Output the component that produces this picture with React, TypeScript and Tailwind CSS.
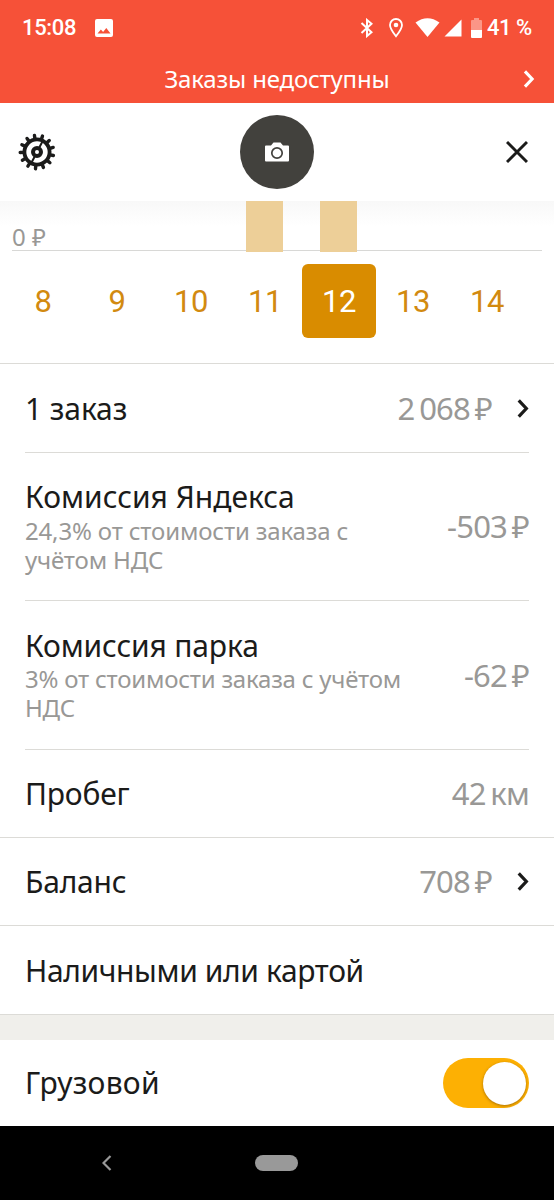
import type { ReactNode } from "react";

const body = "font-['Noto_Sans',sans-serif]";

function Chevron({ className }: { className: string }) {
  return (
    <svg className={className} viewBox="0 0 12 20" fill="none" stroke="currentColor" strokeWidth="3.4">
      <path d="M1.5 1.5 9.5 10 1.5 18.5" />
    </svg>
  );
}

function StatusBar() {
  return (
    <div className="flex h-[55px] items-center pl-[22px] font-['Roboto',sans-serif] text-[22px] font-medium leading-none text-white">
      <span className="w-[73px] tracking-[-0.35px]">15:08</span>
      <svg className="h-[18px] w-[18px]" viewBox="0 0 18 18">
        <path fillRule="evenodd" fill="currentColor" d="M2 0H16Q18 0 18 2V16Q18 18 16 18H2Q0 18 0 16V2Q0 0 2 0ZM2.5 14.5H15.5L11.3 8.9 8.1 13 5.9 10.4Z" />
      </svg>
      <svg className="ml-[247px] h-[20px] w-[13px]" viewBox="0 0 13 20" fill="none" stroke="currentColor" strokeWidth="2">
        <path d="M1.5 5 11.5 14.2 7 18V2L11.5 5.8 1.5 15" />
      </svg>
      <svg className="ml-[16px] h-[20px] w-[14px]" viewBox="0 0 14 20" fill="none" stroke="currentColor" strokeWidth="1.8">
        <path d="M7 18.3C4 14.5 1 10.5 1 7A6 6 0 0 1 13 7C13 10.5 10 14.5 7 18.3Z" />
        <circle cx="7" cy="7" r="2.3" fill="currentColor" stroke="none" />
      </svg>
      <svg className="ml-[12px] h-[20px] w-[25px]" viewBox="0 0 25 20">
        <path fill="currentColor" d="M.5 4.5Q12.5-4 24.5 4.5L12.5 19Z" />
      </svg>
      <svg className="ml-[4px] h-[18px] w-[18px]" viewBox="0 0 18 18">
        <path fill="currentColor" d="M17.5.5V17.5H.5Z" />
      </svg>
      <svg className="ml-[9px] h-[20px] w-[11px]" viewBox="0 0 11 20">
        <path fill="#fb9687" d="M3 0H8V2H10Q11 2 11 3V12H0V3Q0 2 1 2H3Z" />
        <path fill="currentColor" d="M0 12H11V19Q11 20 10 20H1Q0 20 0 19Z" />
      </svg>
      <span className="ml-[5px] whitespace-nowrap tracking-[-0.5px]">41 %</span>
    </div>
  );
}

function Gear() {
  const teeth = Array.from({ length: 13 }, (_, i) => 19 + (i * 360) / 13);
  return (
    <svg className="h-[38px] w-[38px] text-[#1b1b1a]" viewBox="-19 -19 38 38" fill="none" stroke="currentColor">
      <circle r="12.6" strokeWidth="3.8" />
      {teeth.map((a) => (
        <path key={a} d="M0-13.5V-16.8" strokeWidth="3.4" strokeLinecap="round" transform={`rotate(${a})`} />
      ))}
      <circle r="4" strokeWidth="4" />
      <path d="M2.3-4.5 6.5-12.5M-2.3 4.5-6.5 12.5" strokeWidth="2" />
    </svg>
  );
}

function Header() {
  return (
    <header className="grid h-[98px] grid-cols-[1fr_74px_1fr] items-center bg-white px-[18px]">
      <Gear />
      <div className="flex h-[74px] w-[74px] items-center justify-center rounded-full bg-[#42413d]">
        <svg className="h-[20px] w-[24px]" viewBox="0 0 24 20">
          <path fill="#fff" d="M1 3.5H6L8.5.5H15.5L18 3.5H23Q24 3.5 24 4.5V18.5Q24 19.5 23 19.5H1Q0 19.5 0 18.5V4.5Q0 3.5 1 3.5Z" />
          <circle cx="12" cy="11" r="5.2" fill="#fff" stroke="#42413d" strokeWidth="1.7" />
        </svg>
      </div>
      <svg className="mr-[8px] h-[22px] w-[22px] justify-self-end" viewBox="0 0 22 22" stroke="#1b1b1a" strokeWidth="2.9">
        <path d="M1 1 21 21M21 1 1 21" />
      </svg>
    </header>
  );
}

const days = ["8", "9", "10", "11", "12", "13", "14"];

function Chart() {
  return (
    <section className="h-[163px] border-b-[1.4px] border-[#dcdbd7]">
      <div className="relative h-[51px] bg-gradient-to-b from-[#f8f8f8] to-white to-50% px-[12px]">
        <div className="flex h-[50px] items-end border-b border-[#d8d8d6]">
          <span className={`${body} whitespace-nowrap text-[24px] leading-[26px] text-[#999896]`}>0 ₽</span>
        </div>
        <div className="absolute inset-y-0 left-[246px] w-[37px] bg-[#edcf98]" />
        <div className="absolute inset-y-0 left-[320px] w-[37px] bg-[#edcf98]" />
      </div>
      <div className="flex pl-[6px] pt-[12px] font-['Roboto',sans-serif] text-[31px] tracking-[-0.3px]">
        {days.map((d) => (
          <div
            key={d}
            className={
              d === "12"
                ? "flex h-[74px] w-[74px] items-center justify-center rounded-[6px] bg-[#d98c00] pt-[2px] text-white"
                : "flex h-[74px] w-[74px] items-center justify-center pt-[2px] text-[#d28a10]"
            }
          >
            {d}
          </div>
        ))}
      </div>
    </section>
  );
}

function Value({ children }: { children: ReactNode }) {
  return (
    <span className="whitespace-nowrap pb-[1px] text-[31px] leading-[38px] tracking-[-0.8px] text-[#999896] [word-spacing:-2.5px]">
      {children}
    </span>
  );
}

function Title({ children, className }: { children: ReactNode; className: string }) {
  return <div className={`whitespace-nowrap text-[30px] leading-[36px] text-[#1b1b1a] ${className}`}>{children}</div>;
}

export default function App() {
  return (
    <div className={`h-[1200px] w-[554px] overflow-hidden bg-white ${body}`}>
      <div className="h-[103px] bg-[#f65138]">
        <StatusBar />
        <div className="grid h-[48px] grid-cols-[1fr_auto_1fr] items-center px-[19px] text-white">
          <span className="col-start-2 whitespace-nowrap text-[24px] leading-[32px] tracking-[-0.18px]">Заказы недоступны</span>
          <Chevron className="h-[18px] w-[12px] justify-self-end" />
        </div>
      </div>
      <Header />
      <Chart />
      <section className="border-b-[1.4px] border-[#dcdbd7] px-[25px]">
        <div className="flex h-[89px] items-center justify-between border-b-[1.4px] border-[#dcdbd7]">
          <Title className="pt-[1px] tracking-[-0.1px]">1 заказ</Title>
          <div className="flex items-center">
            <Value>2 068 ₽</Value>
            <Chevron className="ml-[25px] h-[19px] w-[12px] text-[#1b1b1a]" />
          </div>
        </div>
        <div className="flex h-[148px] items-center justify-between border-b-[1.4px] border-[#dcdbd7]">
          <div>
            <Title className="tracking-[0px]">Комиссия Яндекса</Title>
            <p className="whitespace-nowrap pt-[1px] text-[24px] leading-[29px] tracking-[-0.17px] text-[#999896]">24,3% от стоимости заказа с<br />учётом НДС</p>
          </div>
          <Value>-503 ₽</Value>
        </div>
        <div className="flex h-[149px] items-center justify-between border-b-[1.4px] border-[#dcdbd7]">
          <div>
            <Title className="tracking-[-0.15px]">Комиссия парка</Title>
            <p className="whitespace-nowrap text-[24px] leading-[29px] tracking-[-0.23px] text-[#999896]">3% от стоимости заказа с учётом<br />НДС</p>
          </div>
          <Value>-62 ₽</Value>
        </div>
        <div className="flex h-[87px] items-center justify-between">
          <Title className="tracking-[-0.2px]">Пробег</Title>
          <Value>42 км</Value>
        </div>
      </section>
      <section className="flex h-[88px] items-center justify-between border-b-[1.4px] border-[#dcdbd7] px-[25px]">
        <Title className="pt-[1px] tracking-[-0.2px]">Баланс</Title>
        <div className="flex items-center">
          <Value>708 ₽</Value>
          <Chevron className="ml-[25px] h-[19px] w-[12px] text-[#1b1b1a]" />
        </div>
      </section>
      <section className="flex h-[89px] items-center border-b-[1.4px] border-[#dcdbd7] px-[25px]">
        <Title className="pt-[2px] tracking-[-0.37px]">Наличными или картой</Title>
      </section>
      <div className="h-[25px] bg-[#f0efeb]" />
      <section className="flex h-[86px] items-center justify-between px-[25px]">
        <Title className="tracking-[0.25px]">Грузовой</Title>
        <div className="flex h-[50px] w-[86px] items-center justify-end rounded-full bg-[#fdb003] pr-[3px]">
          <div className="h-[43px] w-[43px] rounded-full bg-white shadow-[0_1px_3px_rgba(90,50,0,0.5)]" />
        </div>
      </section>
      <nav className="flex h-[74px] items-center bg-black">
        <svg className="ml-[102px] h-[16px] w-[10px]" viewBox="0 0 10 16" fill="none" stroke="#999" strokeWidth="2.2">
          <path d="M8.5 1 1.5 8 8.5 15" />
        </svg>
        <div className="ml-[143px] h-[16px] w-[43px] rounded-full bg-[#999]" />
      </nav>
    </div>
  );
}
